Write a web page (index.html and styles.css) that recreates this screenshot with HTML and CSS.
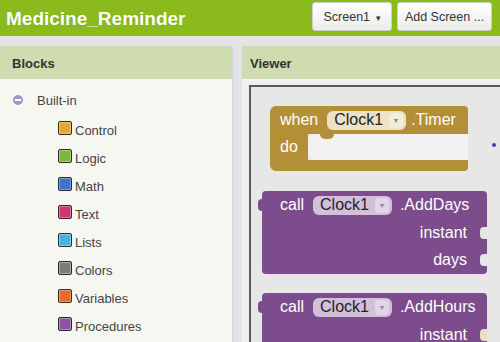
FILE: index.html
```html
<!DOCTYPE html>
<html>
<head>
  <title>Medicine_Reminder</title>
  <link rel="stylesheet" href="styles.css">
</head>
<body>
  <header class="topbar">
    <h1 class="title">Medicine_Reminder</h1>
    <div class="actions">
      <button class="btn btn-screen">Screen1 <span class="caret">&#9662;</span></button>
      <button class="btn btn-add">Add Screen ...</button>
    </div>
  </header>
  <div class="strip"></div>

  <main class="panes">
    <section class="pane pane-blocks">
      <div class="pane-head">Blocks</div>
      <div class="tree">
        <div class="root"><span class="toggle"></span>Built-in</div>
        <ul class="items">
          <li><span class="sq sq-control"></span>Control</li>
          <li><span class="sq sq-logic"></span>Logic</li>
          <li><span class="sq sq-math"></span>Math</li>
          <li><span class="sq sq-text"></span>Text</li>
          <li><span class="sq sq-lists"></span>Lists</li>
          <li><span class="sq sq-colors"></span>Colors</li>
          <li><span class="sq sq-vars"></span>Variables</li>
          <li><span class="sq sq-procs"></span>Procedures</li>
        </ul>
      </div>
    </section>
    <div class="divider"></div>
    <section class="pane pane-viewer">
      <div class="pane-head">Viewer</div>
      <div class="viewer-body">
        <div class="workspace">
          <!-- event block -->
          <div class="event">
            <div class="ev-top">
              <span class="kw">when</span>
              <span class="dd dd-gold">Clock1<span class="dd-arrow">&#9662;</span></span>
              <span class="kw">.Timer</span>
            </div>
            <div class="ev-mid">
              <span class="kw ev-do">do</span>
              <span class="slot"><span class="slot-tab"></span></span>
            </div>
            <div class="ev-bottom"></div>
          </div>
          <span class="dot"></span>

          <div class="call">
            <span class="tab"></span>
            <div class="call-top">
              <span class="kw">call</span>
              <span class="dd dd-purple">Clock1<span class="dd-arrow">&#9662;</span></span>
              <span class="kw">.AddDays</span>
            </div>
            <div class="arg"><span class="kw">instant</span><span class="socket"></span></div>
            <div class="arg"><span class="kw">days</span><span class="socket"></span></div>
          </div>

          <div class="call call-open">
            <span class="tab"></span>
            <div class="call-top">
              <span class="kw">call</span>
              <span class="dd dd-purple">Clock1<span class="dd-arrow">&#9662;</span></span>
              <span class="kw">.AddHours</span>
            </div>
            <div class="arg"><span class="kw">instant</span><span class="socket socket-open"></span></div>
          </div>
        </div>
      </div>
    </section>
  </main>
</body>
</html>
```

FILE: styles.css
```css
html, body {
  margin: 0;
  height: 100%;
  overflow: hidden;
}
body {
  font-family: "Liberation Sans", Arial, sans-serif;
  background: #e5e5e9;
}

/* top bar */
.topbar {
  height: 36px;
  background: #8aba1b;
  display: flex;
  align-items: center;
  justify-content: space-between;
  padding: 0 8px 0 6px;
}
.title {
  margin: 0;
  color: #fff;
  font-size: 19px;
  font-weight: bold;
  padding-top: 1px;
  text-shadow: 0 0 1px rgba(0,0,0,0.15);
}
.actions {
  display: flex;
  gap: 5px;
  padding-bottom: 3px;
}
.btn {
  height: 29px;
  font-family: "Liberation Sans", Arial, sans-serif;
  font-size: 12.5px;
  color: #333;
  background: linear-gradient(#ffffff, #ececec);
  border: 1px solid #cfcfcf;
  border-radius: 3px;
  padding: 0;
}
.btn-screen { width: 80px; }
.btn-add { width: 95px; }
.caret {
  font-size: 9px;
  margin-left: 2px;
}

.strip {
  height: 10px;
  background: #e4e4e8;
}

/* panes */
.panes {
  display: flex;
  height: 296px;
  overflow: hidden;
}
.pane-blocks {
  width: 232px;
  background: #f7f7f2;
  border-right: 1px solid #d6d6d6;
}
.divider {
  width: 9px;
  background: #e2e2e7;
}
.pane-viewer {
  flex: 1;
  background: #f0f0f0;
  display: flex;
  flex-direction: column;
  min-height: 0;
}
.pane-head {
  height: 33px;
  line-height: 36px;
  background: #cedcaf;
  border-bottom: 2px solid #f4f4ee;
  font-size: 13px;
  font-weight: bold;
  color: #333;
  padding-left: 12px;
  flex: none;
}
.pane-viewer .pane-head {
  padding-left: 8px;
}

/* tree */
.tree {
  padding: 9px 0 0 13px;
  font-size: 13px;
  color: #444;
}
.root {
  height: 20px;
  display: flex;
  align-items: center;
}
.toggle {
  width: 10px;
  height: 10px;
  border-radius: 50%;
  background: #9c9acb;
  margin-right: 14px;
  position: relative;
}
.toggle::after {
  content: "";
  position: absolute;
  left: 2px;
  top: 4px;
  width: 6px;
  height: 2px;
  background: #fff;
}
.items {
  list-style: none;
  margin: 7px 0 0 45px;
  padding: 0;
}
.items li {
  height: 22px;
  padding-bottom: 6px;
  display: flex;
  align-items: flex-end;
  line-height: 16px;
}
.sq {
  width: 12px;
  height: 12px;
  border: 1px solid #2c2c2c;
  border-radius: 2px;
  margin: 0 3px 4px 0;
  box-shadow: inset 0 0 0 1px rgba(255,255,255,0.35);
}
.sq-control { background: #e2aa34; }
.sq-logic { background: #7bb53a; }
.sq-math { background: #3d72c6; }
.sq-text { background: #cc3570; }
.sq-lists { background: #43b3e2; }
.sq-colors { background: #7c7c7c; }
.sq-vars { background: #e46a2a; }
.sq-procs { background: #8c55a3; }

/* viewer */
.viewer-body {
  flex: 1;
  min-height: 0;
  padding: 4px 0 0 7px;
}
.workspace {
  box-sizing: border-box;
  height: 100%;
  overflow: hidden;
  border: 2px solid #5a5a5a;
  border-right: none;
  border-bottom: none;
  background: #e7e7e7;
  padding: 19px 0 0 11px;
  position: relative;
  font-size: 16px;
}
.kw {
  color: #fff;
}

.event {
  width: 198px;
  margin-left: 8px;
}
.ev-top {
  background: #b38f37;
  border-radius: 6px 4px 0 0;
  height: 28px;
  display: flex;
  align-items: center;
  padding-left: 10px;
}
.ev-top .dd {
  margin: 0 5px 0 9px;
}
.ev-mid {
  display: flex;
  height: 26px;
}
.ev-do {
  width: 28px;
  background: #b38f37;
  padding-left: 10px;
  line-height: 25px;
}
.slot {
  flex: 1;
  background: #f1f1f1;
  border-radius: 7px 0 0 7px;
  position: relative;
}
.slot-tab {
  position: absolute;
  left: 12px;
  top: 0;
  width: 14px;
  height: 5px;
  background: #b38f37;
  border-radius: 0 0 6px 6px;
}
.ev-bottom {
  height: 11px;
  background: #b38f37;
  border-radius: 0 0 4px 6px;
}
.dot {
  position: absolute;
  left: 241px;
  top: 56px;
  width: 4px;
  height: 4px;
  border-radius: 50%;
  background: #3240c8;
}

.dd {
  display: inline-flex;
  align-items: center;
  border-radius: 6px;
  color: #222;
  padding: 0 3px 0 7px;
  height: 19px;
}
.dd-gold { background: #ede2c6; }
.dd-purple { background: #d3bfda; }
.dd-arrow {
  font-size: 8px;
  line-height: 15px;
  color: #888;
  margin-left: 6px;
  padding: 0 5px;
  border-radius: 3px;
  background: rgba(255,255,255,0.35);
}

.call {
  position: relative;
  width: 225px;
  background: #7c4c8c;
  border-radius: 4px;
  margin-top: 20px;
  padding-bottom: 1px;
}
.call + .call {
  margin-top: 19px;
}
.call-open {
  padding-bottom: 20px;
}
.tab {
  position: absolute;
  left: -4px;
  top: 8px;
  width: 6px;
  height: 12px;
  background: #7c4c8c;
  border-radius: 4px 0 0 4px;
}
.call-top {
  height: 28px;
  display: flex;
  align-items: center;
  padding-left: 18px;
}
.call-top .dd {
  margin: 0 8px 0 9px;
}
.arg {
  height: 27px;
  display: flex;
  align-items: center;
  justify-content: flex-end;
  gap: 13px;
}
.socket {
  width: 7px;
  height: 12px;
  background: #e6e6e6;
  border-radius: 4px 0 0 4px;
}
.socket-open {
  background: #eadfc0;
}
```
